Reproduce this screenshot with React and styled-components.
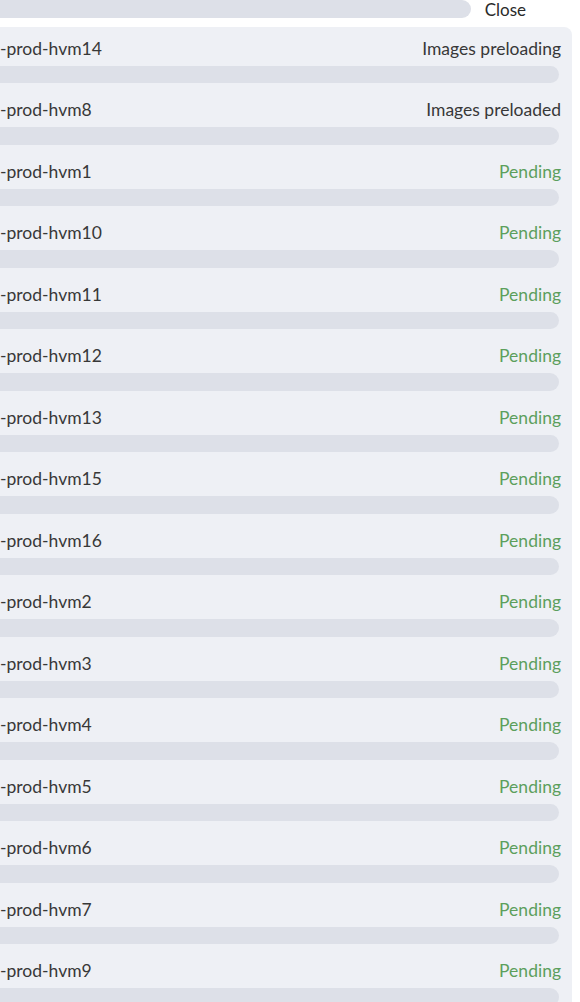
import styled, { createGlobalStyle } from "styled-components";

const GlobalStyle = createGlobalStyle`
  html, body {
    margin: 0;
    padding: 0;
    background: #ffffff;
  }
  body {
    font-family: Lato, "Liberation Sans", sans-serif;
    color: #333333;
  }
`;

const hosts = [
  { name: "-prod-hvm14", status: "Images preloading" },
  { name: "-prod-hvm8", status: "Images preloaded" },
  { name: "-prod-hvm1", status: "Pending" },
  { name: "-prod-hvm10", status: "Pending" },
  { name: "-prod-hvm11", status: "Pending" },
  { name: "-prod-hvm12", status: "Pending" },
  { name: "-prod-hvm13", status: "Pending" },
  { name: "-prod-hvm15", status: "Pending" },
  { name: "-prod-hvm16", status: "Pending" },
  { name: "-prod-hvm2", status: "Pending" },
  { name: "-prod-hvm3", status: "Pending" },
  { name: "-prod-hvm4", status: "Pending" },
  { name: "-prod-hvm5", status: "Pending" },
  { name: "-prod-hvm6", status: "Pending" },
  { name: "-prod-hvm7", status: "Pending" },
  { name: "-prod-hvm9", status: "Pending" },
];

export default function App() {
  return (
    <>
      <GlobalStyle />
      <Viewport>
        <Sheet>
          <TopBar>
            <Progress />
            <CloseButton>Close</CloseButton>
          </TopBar>
          <Panel>
            {hosts.map((h) => (
              <HostRow key={h.name}>
                <HostHead>
                  <HostName>{h.name}</HostName>
                  <HostStatus pending={h.status === "Pending"}>{h.status}</HostStatus>
                </HostHead>
                <HostBar />
              </HostRow>
            ))}
          </Panel>
        </Sheet>
      </Viewport>
    </>
  );
}

const Viewport = styled.div`
  width: 580px;
  height: 1002px;
  overflow: hidden;
`;

const Sheet = styled.div`
  width: 612px;
  margin-left: -40px;
  display: flex;
  flex-direction: column;
  gap: 7px;
`;

const TopBar = styled.div`
  display: flex;
  align-items: flex-start;
`;

const Progress = styled.div`
  flex: 1;
  height: 18px;
  border-radius: 9px;
  background: #dde0e8;
`;

const CloseButton = styled.button`
  border: none;
  background: transparent;
  font-family: Lato, "Liberation Sans", sans-serif;
  font-size: 17px;
  color: #2a2a2a;
  height: 20px;
  line-height: 20px;
  padding: 0 46px 0 14px;
  cursor: pointer;
`;

const Panel = styled.div`
  background: #eef0f5;
  border-top-right-radius: 8px;
  padding: 10px 11px 0 12px;
  display: flex;
  flex-direction: column;
  gap: 15.5px;
`;

const HostRow = styled.div`
  display: flex;
  flex-direction: column;
  gap: 6.5px;
`;

const HostHead = styled.div`
  display: flex;
  justify-content: space-between;
  align-items: center;
  height: 22px;
  font-size: 17.5px;
`;

const HostName = styled.span`
  margin-left: 28px;
  color: #383838;
`;

const HostStatus = styled.span`
  color: ${(p) => (p.pending ? "#5c9f5c" : "#383838")};
`;

const HostBar = styled.div`
  height: 17.5px;
  border-radius: 9px;
  background: #dde0e8;
  margin-right: 2px;
`;
